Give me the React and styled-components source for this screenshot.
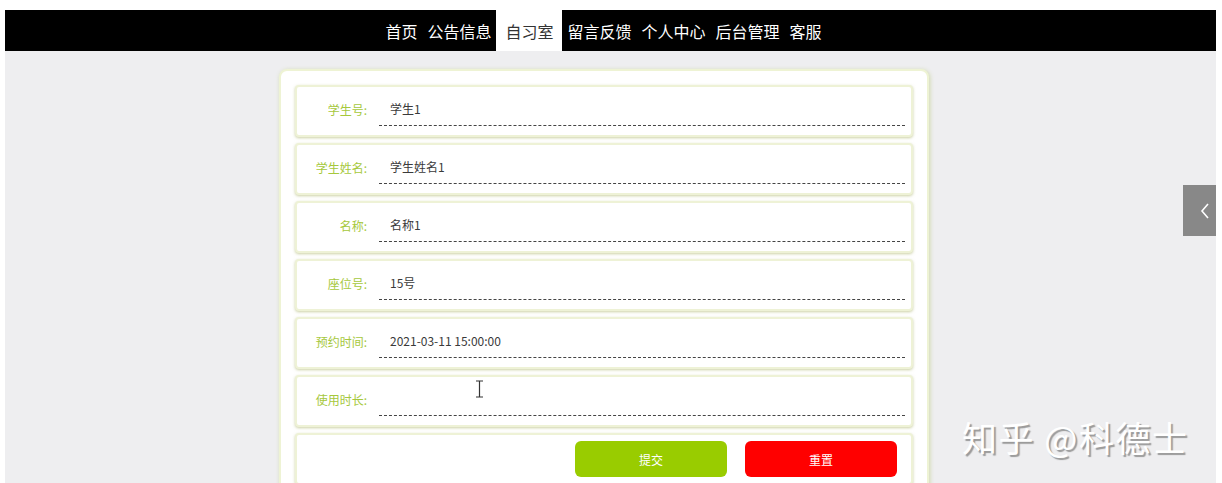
import React from "react";
import styled, { createGlobalStyle } from "styled-components";

const GlobalStyle = createGlobalStyle`
  html, body {
    margin: 0;
    background: #ffffff;
    font-family: "Noto Sans CJK SC", "Liberation Sans", sans-serif;
  }
`;

const Page = styled.div`
  position: relative;
  margin: 10px 6px 0 5px;
  height: 473px;
  background: #eeeef0;
  overflow: hidden;
`;

const Nav = styled.div`
  height: 41px;
  background: #000;
  display: flex;
  justify-content: center;
  align-items: stretch;
  padding-right: 14px;
`;

const NavItem = styled.div`
  display: flex;
  align-items: center;
  padding: 0 ${(p) => (p.active ? "9px" : "5px")};
  font-size: 16px;
  color: ${(p) => (p.active ? "#333" : "#fff")};
  background: ${(p) => (p.active ? "#fff" : "transparent")};
  white-space: nowrap;
`;

const Main = styled.div`
  display: flex;
  justify-content: center;
  padding-right: 13px;
`;

const Card = styled.div`
  margin-top: 18px;
  width: 618px;
  padding: 14px 14px 0 14px;
  background: #fff;
  border: 2px solid #eef3d4;
  border-radius: 8px;
  box-shadow: 1px 1px 4px rgba(170, 190, 90, 0.45);
`;

const Row = styled.div`
  height: 48px;
  margin-bottom: 6px;
  display: flex;
  align-items: center;
  justify-content: ${(p) => (p.end ? "flex-end" : "flex-start")};
  padding-right: ${(p) => (p.end ? "14px" : "6px")};
  background: #fff;
  border: 2px solid #eef2d6;
  border-radius: 4px;
  box-shadow: 0 1px 3px rgba(160, 170, 90, 0.55);
`;

const Label = styled.div`
  width: 70px;
  text-align: right;
  font-size: 12px;
  color: #a6c83c;
  margin-right: 12px;
  white-space: nowrap;
  position: relative;
  top: -2px;
`;

const Field = styled.div`
  position: relative;
  flex: 1;
  height: 29px;
  margin-bottom: 2px;
  padding-bottom: 2px;
  display: flex;
  align-items: center;
  padding-left: 11px;
  border-bottom: 1px dashed #444;
  font-size: 12px;
  color: #3a3a3a;
`;

const Button = styled.div`
  width: 152px;
  height: 36px;
  margin-left: 18px;
  display: flex;
  align-items: center;
  justify-content: center;
  border-radius: 6px;
  font-size: 12px;
  color: #fff;
  background: ${(p) => p.bg};
`;

const SideTab = styled.div`
  position: absolute;
  right: 0;
  top: 175px;
  width: 33px;
  height: 51px;
  background: #888;
  display: flex;
  align-items: center;
  justify-content: center;
  padding-left: 10px;
  box-sizing: border-box;
`;

const Cursor = styled.svg`
  position: absolute;
  left: 96px;
  top: -4px;
`;

const Watermark = styled.div`
  position: absolute;
  left: 957px;
  top: 401px;
  font-size: 35px;
  color: #fff;
  letter-spacing: 1.5px;
  text-shadow: 2px 2px 1px #9a9a9a;
  white-space: nowrap;
`;

const navItems = ["首页", "公告信息", "自习室", "留言反馈", "个人中心", "后台管理", "客服"];

const fields = [
  { label: "学生号:", value: "学生1" },
  { label: "学生姓名:", value: "学生姓名1" },
  { label: "名称:", value: "名称1" },
  { label: "座位号:", value: "15号" },
  { label: "预约时间:", value: "2021-03-11 15:00:00" },
  { label: "使用时长:", value: "", cursor: true },
];

export default function App() {
  return (
    <>
      <GlobalStyle />
      <Page>
        <Nav>
          {navItems.map((n) => (
            <NavItem key={n} active={n === "自习室"}>
              {n}
            </NavItem>
          ))}
        </Nav>
        <Main>
          <Card>
            {fields.map((f) => (
              <Row key={f.label}>
                <Label>{f.label}</Label>
                <Field>
                  {f.value}
                  {f.cursor && (
                    <Cursor width="9" height="18" viewBox="0 0 9 18">
                      <path d="M1 1h7M4.5 1v16M1 17h7" stroke="#333" strokeWidth="1.2" fill="none" />
                    </Cursor>
                  )}
                </Field>
              </Row>
            ))}
            <Row end>
              <Button bg="#99cc00">提交</Button>
              <Button bg="#ff0000">重置</Button>
            </Row>
          </Card>
        </Main>
        <SideTab>
          <svg width="10" height="18" viewBox="0 0 10 18">
            <path d="M8 2L2 9l6 7" stroke="#fff" strokeWidth="1.6" fill="none" />
          </svg>
        </SideTab>
        <Watermark>知乎 @科德士</Watermark>
      </Page>
    </>
  );
}
